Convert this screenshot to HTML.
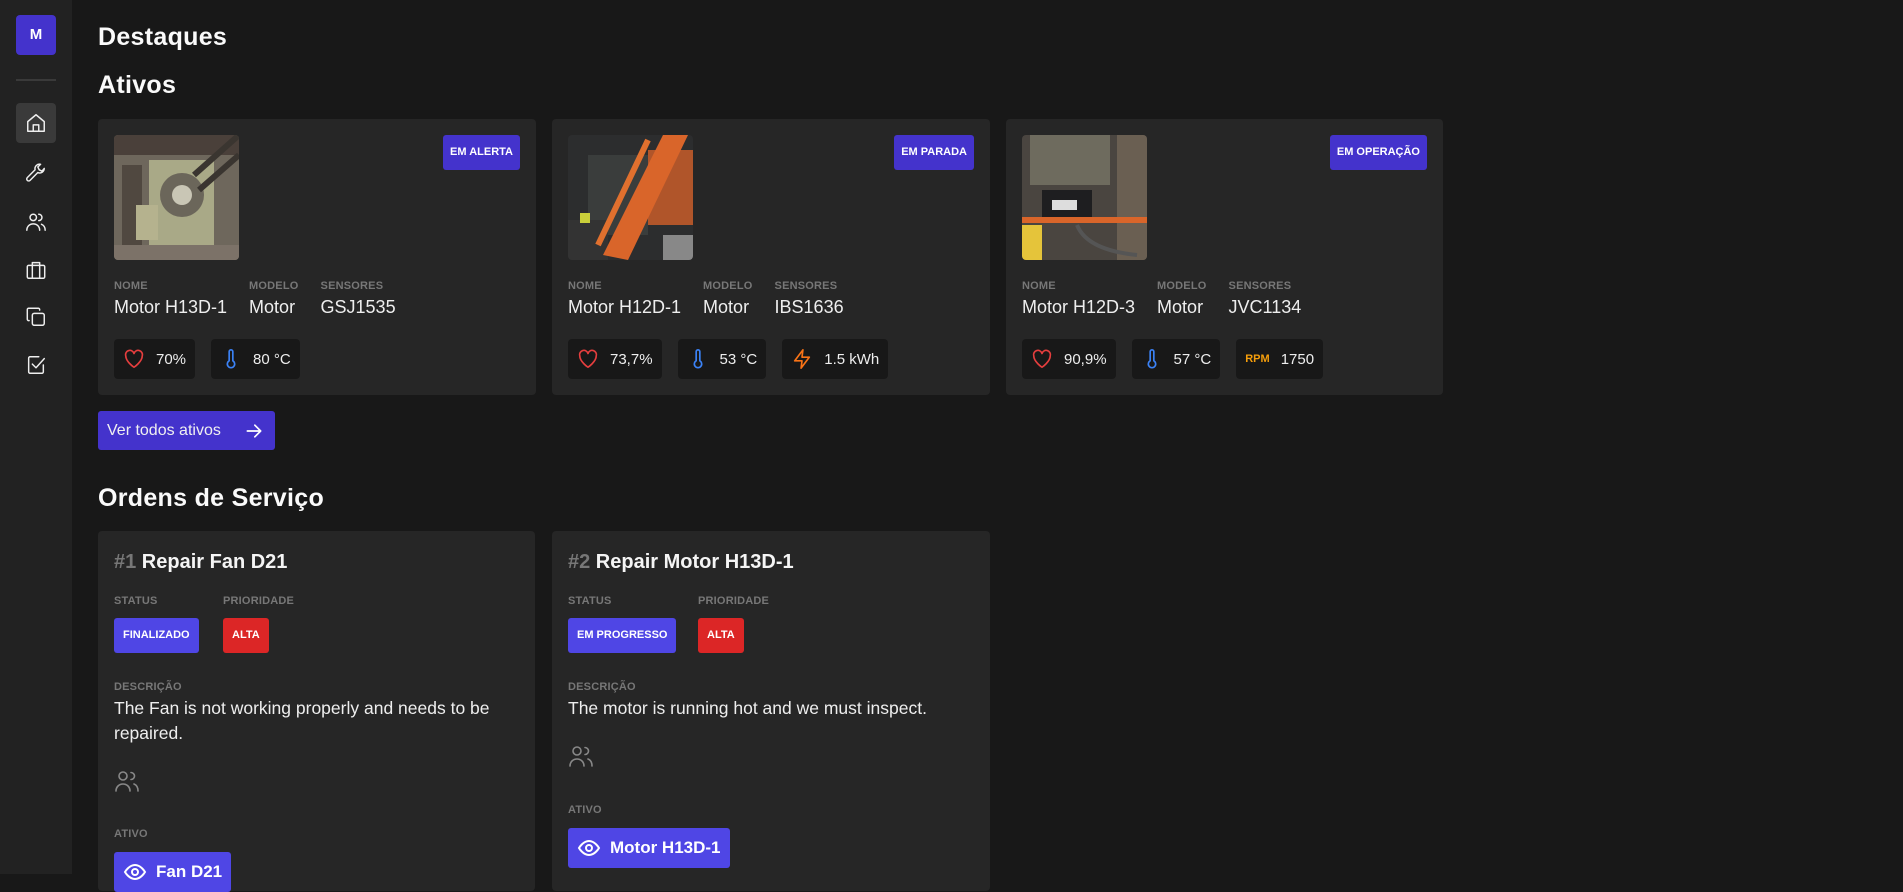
<!DOCTYPE html>
<html><head><meta charset="utf-8"><style>
*{box-sizing:border-box;margin:0;padding:0}
body{width:1903px;height:874px;overflow:hidden;background:#181818;font-family:"Liberation Sans",sans-serif;color:#f2f2f2;position:relative}
.side{position:absolute;left:0;top:0;width:72px;height:874px;background:#222}
.av{position:absolute;left:16px;top:15px;width:40px;height:40px;background:#4433cc;border-radius:4px;color:#fff;font-weight:bold;font-size:15px;text-align:center;line-height:40px}
.div{position:absolute;left:16px;top:79px;width:40px;height:2px;background:#3a3a3a}
.ic{position:absolute;left:16px;width:40px;height:40px;display:flex;align-items:center;justify-content:center;border-radius:4px}
.ic svg{width:22px;height:22px;fill:none;stroke:#eee;stroke-width:1.6;stroke-linecap:round;stroke-linejoin:round}
.abs{position:absolute}
h1{position:absolute;left:98px;font-size:25px;font-weight:bold;color:#fafafa;letter-spacing:.3px}
.card{position:absolute;background:#262626;border-radius:4px}
.img{position:absolute;left:16px;top:16px;width:125px;height:125px;border-radius:4px;overflow:hidden}
.badge{position:absolute;top:16px;right:16px;height:35px;padding:0 7px;background:#4433cc;border-radius:3px;font-size:11px;font-weight:bold;line-height:35px;color:#fff}
.lbl{font-size:11px;font-weight:bold;color:#777;letter-spacing:.2px}
.val{font-size:18px;color:#eee;margin-top:5px}
.cols{position:absolute;left:16px;top:161px;display:flex;gap:22px}
.chips{position:absolute;left:16px;top:220px;display:flex;gap:16px}
.chip{height:40px;background:#181818;border-radius:4px;display:flex;align-items:center;padding:0 9px;gap:11px;font-size:15px;color:#eee}
.chip svg{width:22px;height:24px;fill:none;stroke-width:1.8;stroke-linecap:round;stroke-linejoin:round}
.btn{position:absolute;left:98px;top:411px;width:177px;height:39px;background:#4433cc;border-radius:3px;font-size:16px;color:#f0f0f0;line-height:39px;padding-left:9px}
.os h3{position:absolute;left:16px;top:20px;font-size:20px;font-weight:bold;color:#f5f5f5;white-space:nowrap}
.os h3 span{color:#777}
.pill{display:inline-block;height:35px;line-height:35px;padding:0 9px;border-radius:3px;font-size:11px;font-weight:bold;color:#fff;background:#4f46e5;white-space:nowrap}
.red{background:#dc2626}
.desc{font-size:17.5px;color:#eee;line-height:25px}
.abtn{position:absolute;height:40px;background:#4f46e5;border-radius:3px;display:flex;align-items:center;padding:0 9px;gap:9px;font-size:17px;font-weight:bold;color:#fff;white-space:nowrap}
.abtn svg{width:24px;height:24px;fill:none;stroke:#fff;stroke-width:2}
.usr{width:26px;height:22px;fill:none;stroke:#888;stroke-width:1.6;stroke-linecap:round}
</style></head><body>
<div class="side">
<div class="av">M</div>
<div class="div"></div>
<div class="ic" style="top:103px;background:#3a3a3a"><svg viewBox="0 0 24 24"><path d="M3 10.5L12 3l9 7.5V21H3z"/><path d="M9 21v-7h6v7"/></svg></div>
<div class="ic" style="top:153px"><svg viewBox="0 0 24 24"><path d="M21 7a5 5 0 0 1-7 4.5L5.5 20a2 2 0 0 1-3-3L11 8.5A5 5 0 0 1 17 2.5l-3 3 1.5 3 3 1.5z"/></svg></div>
<div class="ic" style="top:202px"><svg viewBox="0 0 24 24"><circle cx="9" cy="7" r="3.5"/><path d="M2 21c0-4 3-7 7-7s7 3 7 7"/><path d="M15 3.5a3.5 3.5 0 0 1 0 7"/><path d="M18 14.5c2.5 1 4 3.5 4 6.5"/></svg></div>
<div class="ic" style="top:250px"><svg viewBox="0 0 24 24"><rect x="2.5" y="7" width="19" height="14" rx="1.5"/><path d="M8 7V4h8v3M8 7v14M16 7v14"/></svg></div>
<div class="ic" style="top:297px"><svg viewBox="0 0 24 24"><rect x="8" y="8" width="13" height="13" rx="2"/><path d="M16 4.5V4a1.5 1.5 0 0 0-1.5-1.5H4A1.5 1.5 0 0 0 2.5 4v10.5A1.5 1.5 0 0 0 4 16h.5"/></svg></div>
<div class="ic" style="top:345px"><svg viewBox="0 0 24 24"><path d="M20 12v7.5a1.5 1.5 0 0 1-1.5 1.5h-13A1.5 1.5 0 0 1 4 19.5v-15A1.5 1.5 0 0 1 5.5 3H15"/><path d="M8 11l4 4 9-10"/></svg></div>
</div>

<h1 style="top:23px">Destaques</h1>
<h1 style="top:71px">Ativos</h1>

<div class="card" style="left:98px;top:119px;width:438px;height:276px">
<div class="img"><svg width="125" height="125"><rect width="125" height="125" fill="#6e675c"/><rect x="0" y="0" width="125" height="20" fill="#4a403a"/><rect x="8" y="30" width="20" height="85" fill="#504840"/><rect x="35" y="25" width="65" height="90" fill="#a9a987"/><circle cx="68" cy="60" r="22" fill="#6b665a"/><circle cx="68" cy="60" r="10" fill="#c9c6b5"/><rect x="22" y="70" width="22" height="35" fill="#b5b28e"/><rect x="0" y="110" width="125" height="15" fill="#7c7268"/><path d="M80 40L125 0M85 55L125 20" stroke="#3a3530" stroke-width="6"/></svg></div>
<div class="badge">EM ALERTA</div>
<div class="cols"><div><div class="lbl">NOME</div><div class="val">Motor H13D-1</div></div><div><div class="lbl">MODELO</div><div class="val">Motor</div></div><div><div class="lbl">SENSORES</div><div class="val">GSJ1535</div></div></div>
<div class="chips">
<div class="chip"><svg viewBox="0 0 24 24" stroke="#e53e3e"><path d="M12 21S3 15 3 8.5A4.5 4.5 0 0 1 12 6a4.5 4.5 0 0 1 9 2.5C21 15 12 21 12 21z"/></svg>70%</div>
<div class="chip"><svg viewBox="0 0 24 24" stroke="#3b82f6"><path d="M10 14V4a2 2 0 0 1 4 0v10a4 4 0 1 1-4 0z"/></svg>80 °C</div>
</div>
</div>

<div class="card" style="left:552px;top:119px;width:438px;height:276px">
<div class="img"><svg width="125" height="125"><rect width="125" height="125" fill="#2c2d2e"/><rect x="20" y="20" width="60" height="80" fill="#3a3d3c"/><rect x="80" y="15" width="45" height="75" fill="#b0552a"/><rect x="0" y="85" width="40" height="40" fill="#333"/><rect x="12" y="78" width="10" height="10" fill="#c9cf3a"/><path d="M35 120L95 0h25L60 125z" fill="#d9652a"/><path d="M30 110L80 5" stroke="#e0702e" stroke-width="6"/><rect x="95" y="100" width="30" height="25" fill="#888"/></svg></div>
<div class="badge">EM PARADA</div>
<div class="cols"><div><div class="lbl">NOME</div><div class="val">Motor H12D-1</div></div><div><div class="lbl">MODELO</div><div class="val">Motor</div></div><div><div class="lbl">SENSORES</div><div class="val">IBS1636</div></div></div>
<div class="chips">
<div class="chip"><svg viewBox="0 0 24 24" stroke="#e53e3e"><path d="M12 21S3 15 3 8.5A4.5 4.5 0 0 1 12 6a4.5 4.5 0 0 1 9 2.5C21 15 12 21 12 21z"/></svg>73,7%</div>
<div class="chip"><svg viewBox="0 0 24 24" stroke="#3b82f6"><path d="M10 14V4a2 2 0 0 1 4 0v10a4 4 0 1 1-4 0z"/></svg>53 °C</div>
<div class="chip"><svg viewBox="0 0 24 24" stroke="#f97316"><path d="M13 2L4 14h8l-1 8 9-12h-8z"/></svg>1.5 kWh</div>
</div>
</div>

<div class="card" style="left:1006px;top:119px;width:437px;height:276px">
<div class="img"><svg width="125" height="125"><rect width="125" height="125" fill="#4a4540"/><rect x="8" y="0" width="80" height="50" fill="#6e6b5e"/><rect x="20" y="55" width="50" height="30" fill="#1e1e20"/><rect x="30" y="65" width="25" height="10" fill="#ddd"/><rect x="95" y="0" width="30" height="125" fill="#6a5f52"/><rect x="0" y="82" width="125" height="6" fill="#d9652a"/><rect x="0" y="90" width="20" height="35" fill="#e5c43a"/><path d="M55 90q10 25 60 30" stroke="#555" stroke-width="4" fill="none"/></svg></div>
<div class="badge">EM OPERAÇÃO</div>
<div class="cols"><div><div class="lbl">NOME</div><div class="val">Motor H12D-3</div></div><div><div class="lbl">MODELO</div><div class="val">Motor</div></div><div><div class="lbl">SENSORES</div><div class="val">JVC1134</div></div></div>
<div class="chips">
<div class="chip"><svg viewBox="0 0 24 24" stroke="#e53e3e"><path d="M12 21S3 15 3 8.5A4.5 4.5 0 0 1 12 6a4.5 4.5 0 0 1 9 2.5C21 15 12 21 12 21z"/></svg>90,9%</div>
<div class="chip"><svg viewBox="0 0 24 24" stroke="#3b82f6"><path d="M10 14V4a2 2 0 0 1 4 0v10a4 4 0 1 1-4 0z"/></svg>57 °C</div>
<div class="chip"><span style="color:#f59e0b;font-size:11px;font-weight:bold">RPM</span>1750</div>
</div>
</div>

<div class="btn">Ver todos ativos <svg style="position:absolute;left:146px;top:10px" width="20" height="20" viewBox="0 0 24 24" fill="none" stroke="#fff" stroke-width="2" stroke-linecap="round" stroke-linejoin="round"><path d="M4 12h16M13 5l7 7-7 7"/></svg></div>

<h1 style="top:484px">Ordens de Serviço</h1>

<div class="card os" style="left:98px;top:531px;width:437px;height:360px">
<h3><span>#1</span> Repair Fan D21</h3>
<div class="lbl abs" style="left:16px;top:64px">STATUS</div>
<div class="lbl abs" style="left:125px;top:64px">PRIORIDADE</div>
<div class="abs" style="left:16px;top:87px"><span class="pill">FINALIZADO</span></div>
<div class="abs" style="left:125px;top:87px"><span class="pill red">ALTA</span></div>
<div class="lbl abs" style="left:16px;top:150px">DESCRIÇÃO</div>
<div class="desc abs" style="left:16px;top:165px;width:405px">The Fan is not working properly and needs to be repaired.</div>
<svg class="usr abs" style="left:16px;top:239px" viewBox="0 0 26 22"><circle cx="9" cy="6" r="4"/><path d="M2 21c0-4 3-7 7-7s7 3 7 7M17 2.5a3.5 3.5 0 0 1 0 7M20 14c2.5 1 4 3.5 4 7"/></svg>
<div class="lbl abs" style="left:16px;top:297px">ATIVO</div>
<div class="abtn" style="left:16px;top:321px"><svg viewBox="0 0 24 24"><path d="M2 12s4-7 10-7 10 7 10 7-4 7-10 7S2 12 2 12z"/><circle cx="12" cy="12" r="3"/></svg>Fan D21</div>
</div>

<div class="card os" style="left:552px;top:531px;width:438px;height:360px">
<h3><span>#2</span> Repair Motor H13D-1</h3>
<div class="lbl abs" style="left:16px;top:64px">STATUS</div>
<div class="lbl abs" style="left:146px;top:64px">PRIORIDADE</div>
<div class="abs" style="left:16px;top:87px"><span class="pill">EM PROGRESSO</span></div>
<div class="abs" style="left:146px;top:87px"><span class="pill red">ALTA</span></div>
<div class="lbl abs" style="left:16px;top:150px">DESCRIÇÃO</div>
<div class="desc abs" style="left:16px;top:165px;width:405px">The motor is running hot and we must inspect.</div>
<svg class="usr abs" style="left:16px;top:214px" viewBox="0 0 26 22"><circle cx="9" cy="6" r="4"/><path d="M2 21c0-4 3-7 7-7s7 3 7 7M17 2.5a3.5 3.5 0 0 1 0 7M20 14c2.5 1 4 3.5 4 7"/></svg>
<div class="lbl abs" style="left:16px;top:273px">ATIVO</div>
<div class="abtn" style="left:16px;top:297px"><svg viewBox="0 0 24 24"><path d="M2 12s4-7 10-7 10 7 10 7-4 7-10 7S2 12 2 12z"/><circle cx="12" cy="12" r="3"/></svg>Motor H13D-1</div>
</div>
</body></html>
